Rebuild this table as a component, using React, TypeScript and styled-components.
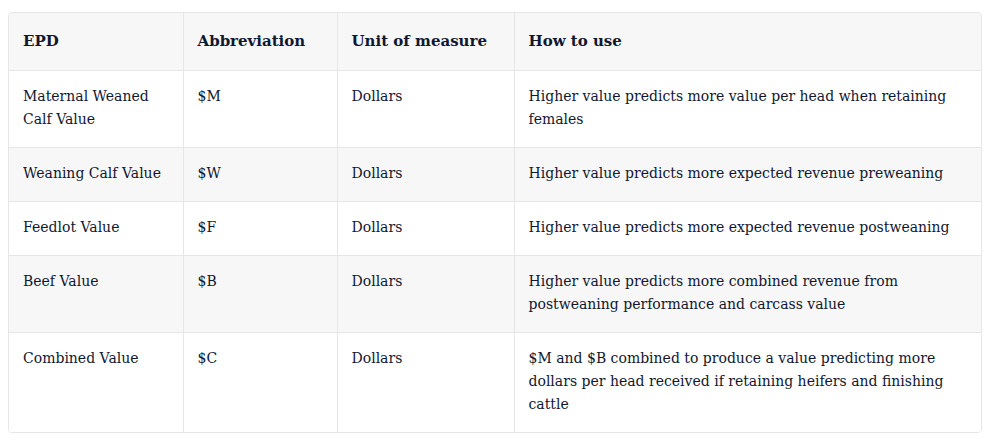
import React from "react";
import styled, { createGlobalStyle } from "styled-components";

const GlobalStyle = createGlobalStyle`
  html, body {
    margin: 0;
    padding: 0;
    background: #ffffff;
  }
  body {
    font-family: "DejaVu Serif", "Liberation Serif", serif;
    color: #101830;
  }
`;

const SPage = styled.div`
  padding: 12px 8px 0 8px;
`;

const STableWrap = styled.div`
  border: 1px solid #e6e6e6;
  border-radius: 4px;
  overflow: hidden;
`;

const STable = styled.table`
  width: 100%;
  border-collapse: collapse;
  table-layout: fixed;
`;

const SHeadCell = styled.th<{ $width?: number }>`
  box-sizing: border-box;
  width: ${(p) => (p.$width ? `${p.$width}px` : "auto")};
  text-align: left;
  font-weight: 700;
  font-size: 15px;
  line-height: 26px;
  padding: 15px 14px 16px 14px;
  background: #f7f7f7;
  border-right: 1px solid #e6e6e6;
  border-bottom: 1px solid #e6e6e6;
  &:last-child {
    border-right: none;
  }
`;

const SRow = styled.tr<{ $shaded: boolean }>`
  background: ${(p) => (p.$shaded ? "#f7f7f7" : "#ffffff")};
  &:last-child td {
    border-bottom: none;
  }
`;

const SCell = styled.td`
  box-sizing: border-box;
  vertical-align: top;
  font-size: 14px;
  line-height: 23px;
  padding: 14px 14px 16px 14px;
  border-right: 1px solid #e6e6e6;
  border-bottom: 1px solid #e6e6e6;
  &:last-child {
    border-right: none;
  }
`;

const columns = [
  { label: "EPD", width: 174 },
  { label: "Abbreviation", width: 154 },
  { label: "Unit of measure", width: 177 },
  { label: "How to use" },
];

const rows = [
  [
    "Maternal Weaned Calf Value",
    "$M",
    "Dollars",
    "Higher value predicts more value per head when retaining females",
  ],
  [
    "Weaning Calf Value",
    "$W",
    "Dollars",
    "Higher value predicts more expected revenue preweaning",
  ],
  [
    "Feedlot Value",
    "$F",
    "Dollars",
    "Higher value predicts more expected revenue postweaning",
  ],
  [
    "Beef Value",
    "$B",
    "Dollars",
    "Higher value predicts more combined revenue from postweaning performance and carcass value",
  ],
  [
    "Combined Value",
    "$C",
    "Dollars",
    "$M and $B combined to produce a value predicting more dollars per head received if retaining heifers and finishing cattle",
  ],
];

const App = () => {
  return (
    <>
      <GlobalStyle />
      <SPage>
        <STableWrap>
          <STable>
            <thead>
              <tr>
                {columns.map((c) => (
                  <SHeadCell key={c.label} $width={c.width}>
                    {c.label}
                  </SHeadCell>
                ))}
              </tr>
            </thead>
            <tbody>
              {rows.map((r, i) => (
                <SRow key={r[0]} $shaded={i % 2 === 1}>
                  {r.map((v, j) => (
                    <SCell key={j}>{v}</SCell>
                  ))}
                </SRow>
              ))}
            </tbody>
          </STable>
        </STableWrap>
      </SPage>
    </>
  );
};

export default App;
